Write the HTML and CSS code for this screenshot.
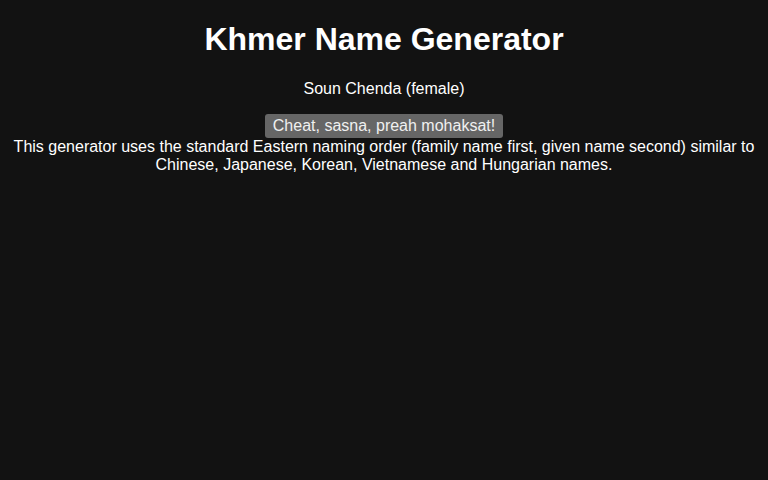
FILE: index.html
```html
<!DOCTYPE html>
<html>
<head>
<meta charset="utf-8">
<link rel="stylesheet" href="styles.css">
</head>
<body>
<div class="app">
<h1 class="title">Khmer Name Generator</h1>
<p class="name">Soun Chenda (female)</p>
<button class="gen">Cheat, sasna, preah mohaksat!</button>
<div class="note">This generator uses the standard Eastern naming order (family name first, given name second) similar to Chinese, Japanese, Korean, Vietnamese and Hungarian names.</div>
</div>
</body>
</html>
```
FILE: styles.css
```css
html, body {
  background: #121212;
}
body {
  margin: 0 8px 8px;
  color: #ffffff;
  font-family: "Liberation Sans", Arial, sans-serif;
  font-size: 16px;
}
.app {
  text-align: center;
}
.title {
  font-size: 32px;
  font-weight: bold;
  margin: 21.44px 0;
}
.name {
  margin: 16px 0;
}
.gen {
  font-family: "Liberation Sans", Arial, sans-serif;
  font-size: 16px;
  color: #f0f0f0;
  background: #666666;
  border: none;
  border-radius: 3px;
  padding: 2px 8px;
  line-height: 20px;
  cursor: pointer;
}
.note {
  line-height: 18px;
}
```
